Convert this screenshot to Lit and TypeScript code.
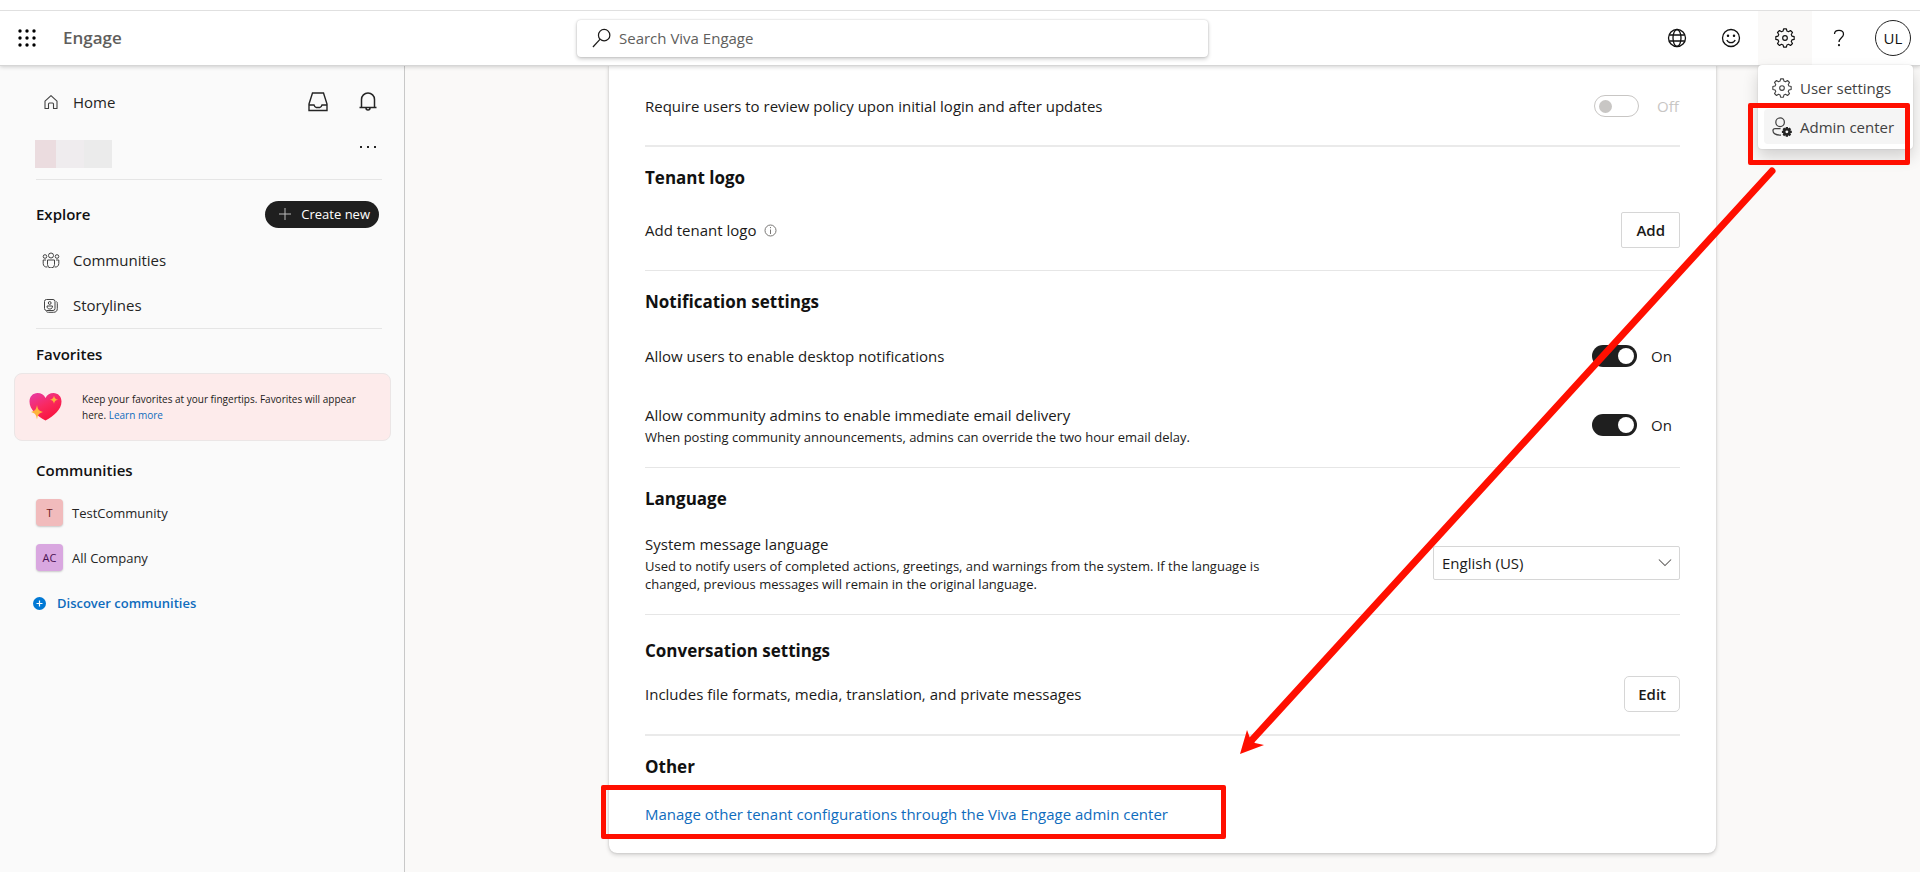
import { LitElement, html, css, svg, nothing } from "lit";
import { customElement } from "lit/decorators.js";

const gear = svg`<path d="M10.3 2h3.4l.6 2.7 1.9.8 2.4-1.5 2.4 2.4-1.5 2.4.8 1.9 2.7.6v3.4l-2.7.6-.8 1.9 1.5 2.4-2.4 2.4-2.4-1.5-1.9.8-.6 2.7h-3.4l-.6-2.7-1.9-.8L5.4 22 3 19.6l1.5-2.4-.8-1.9L1 14.7v-3.4l2.7-.6.8-1.9L3 6.4 5.4 4l2.4 1.5 1.9-.8z" transform="translate(0 -1)" stroke-linejoin="round"/><circle cx="12" cy="12" r="2.8"/>`;

const icons = {
  waffle: svg`<g fill="#000" stroke="none">${[2, 9, 16].map((y) => [2, 9, 16].map((x) => svg`<circle cx=${x} cy=${y} r="1.7"/>`))}</g>`,
  search: svg`<circle cx="12.8" cy="7" r="6"/><path d="M8.6 11.2L1 19.5"/>`,
  globe: svg`<circle cx="10" cy="10" r="8.5"/><ellipse cx="10" cy="10" rx="4" ry="8.5"/><path d="M2.2 7h15.6M2.2 13h15.6"/>`,
  smile: svg`<circle cx="10" cy="10" r="8.5"/><path d="M5.8 12a4.6 4.6 0 0 0 8.4 0"/><circle cx="7" cy="7.8" r=".6" fill="currentColor"/><circle cx="13" cy="7.8" r=".6" fill="currentColor"/>`,
  help: svg`<path d="M5 5.500C5 3 7 1.500 10 1.500s5 1.700 5 4.300c0 3.700-5 4.200-5 8.700"/><circle cx="10" cy="18" r=".5" fill="currentColor"/>`,
  home: svg`<path d="M2 7.200L8 1.700l6 5.500v7.300h-3.500V10a1 1 0 0 0-1-1h-3a1 1 0 0 0-1 1v4.500H2z" stroke-linejoin="round"/>`,
  inbox: svg`<path d="M1 12L4.500 1h11L19 12v6.500H1zM1 13h5c.5 1.500 1 2.500 2.200 2.500h3.600c1.200 0 1.700-1 2.200-2.500h5"/>`,
  bell: svg`<path d="M3.500 15V7.500a6.500 6.500 0 0 1 13 0V15M1.500 15.500h17M8 16a2 2 0 0 0 4 0"/>`,
  people: svg`<circle cx="9" cy="3.500" r="2.500"/><circle cx="3" cy="4.500" r="1.800"/><circle cx="15" cy="4.500" r="1.800"/><path d="M5.500 8h7v4.500a3.500 3.500 0 0 1-7 0zM4 8H1.200v3.500C1.200 14 3 15.300 5.300 15M14 8h2.800v3.500c0 2.500-1.800 3.800-4.100 3.500"/>`,
  story: svg`<rect x="1.500" y="1.500" width="10.500" height="11" rx="2"/><path d="M13.500 3.500c.6.5.8 1 .8 2v5c0 2.500-1.300 3.800-3.800 3.800h-5c-1 0-1.700-.3-2.200-.8"/><circle cx="6.700" cy="5" r="1.400"/><path d="M4 8h5.500c0 2-1 3-2.700 3S4 10 4 8z"/>`,
  chevron: svg`<path d="M1 4l7 7 7-7"/>`,
  info: svg`<circle cx="6.500" cy="6.500" r="5.500"/><path d="M6.500 5.500V10M6.500 3v1.200"/>`,
  plus: svg`<path d="M6 0v12M0 6h12"/>`,
  admin: svg`<circle cx="8.500" cy="5.500" r="4.500"/><path d="M9.500 19C3.500 19 1 17 1 14.500c0-1.300 1-2.200 2.300-2.200H9"/>
    <g stroke="#242424" stroke-width="2.600"><circle cx="15.600" cy="15.600" r="2.800"/><path d="M15.600 10.400v2M15.600 18.800v2M10.400 15.600h2M18.800 15.600h2M11.900 11.900l1.400 1.400M17.900 17.900l1.400 1.400M19.300 11.900l-1.400 1.400M13.300 17.900l-1.400 1.400" stroke-width="2.400"/></g>`,
};

const icon = (shape: unknown, w: number, h: number, box: string, stroke = 1.2) =>
  html`<svg class="icon" aria-hidden="true" width=${w} height=${h} viewBox=${box} fill="none" stroke="currentColor" stroke-width=${stroke}>${shape}</svg>`;

const base = css`
  * { box-sizing: border-box; }
  :host { font-family: "Segoe UI", "Open Sans", "Noto Sans", sans-serif; color: #1b1a19; }
  h2, p { margin: 0; }
  button, input, select { font: inherit; color: inherit; margin: 0; }
  a { color: #0f6cbd; text-decoration: none; }
  .icon { display: block; flex: none; }
`;

@customElement("engage-header")
class EngageHeader extends LitElement {
  static styles = [base, css`
    :host { display: block; position: relative; z-index: 2; padding-top: 10px; background: #fff; box-shadow: 0 1px 0 #d6d6d6, 0 2px 4px rgba(0, 0, 0, .18); }
    .bar { display: grid; grid-template-columns: 577fr 631fr 442fr auto; align-items: center; height: 55px; border-top: 1px solid #e0e0e0; }
    .brand { display: flex; align-items: center; }
    .waffle { border: 0; background: none; padding: 0 18px; }
    .name { font-size: 17px; line-height: 24px; font-weight: 600; color: #605e5c; padding-left: 9px; }
    .search { display: flex; align-items: center; gap: 8px; height: 37px; padding: 0 15px; border-radius: 4px; background: #fff; box-shadow: 0 0 2px rgba(0, 0, 0, .2), 0 2px 4px rgba(0, 0, 0, .2); }
    .search input { flex: 1; min-width: 0; border: 0; outline: 0; padding: 0; background: none; font-size: 15px; line-height: 22px; }
    .search input::placeholder { color: #605e5c; opacity: 1; }
    .tools { grid-column: 4; display: flex; height: 54px; }
    .tool { width: 54px; height: 54px; display: grid; place-items: center; border: 0; background: none; padding: 0; color: #111; }
    .tool.open { background: #faf9f8; }
    .avatar { width: 36px; height: 36px; border: 1px solid #222; border-radius: 50%; display: grid; place-items: center; font-size: 15px; line-height: 20px; }
    .anchor { position: relative; }
    .menu { position: absolute; top: 54px; left: 0; width: 155px; padding: 5px 6px; border-radius: 4px; background: #fff; box-shadow: 0 0 2px rgba(0, 0, 0, .14), 0 8px 16px rgba(0, 0, 0, .16); }
    .item { position: relative; display: flex; align-items: center; gap: 8px; padding: 0 8px; height: 35px; border-radius: 4px; font-size: 15px; line-height: 22px; color: #424242; white-space: nowrap; }
    .item + .item { margin-top: 4px; background: #f5f5f5; }
    .mark { position: absolute; left: -16px; top: -6px; width: 162px; height: 62px; border: 5px solid #ff0f00; border-radius: 2px; pointer-events: none; }
    .arrow { position: absolute; right: 140px; top: 163px; pointer-events: none; }
  `];

  render() {
    return html`
      <header class="bar">
        <div class="brand">
          <button class="waffle" aria-label="App launcher">${icon(icons.waffle, 18, 18, "0 0 18 18")}</button>
          <span class="name">Engage</span>
        </div>
        <label class="search">
          ${icon(icons.search, 19, 20, "0 0 20 20", 1.3)}
          <input type="search" aria-label="Search Viva Engage" placeholder="Search Viva Engage">
        </label>
        <div class="tools">
          <button class="tool" aria-label="Language">${icon(icons.globe, 20, 20, "0 0 20 20", 1.3)}</button>
          <button class="tool" aria-label="Feedback">${icon(icons.smile, 20, 20, "0 0 20 20", 1.3)}</button>
          <div class="anchor">
            <button class="tool open" aria-label="Settings">${icon(gear, 20, 20, "0 0 24 24", 1.4)}</button>
            <nav class="menu">
              <a class="item" href="#user">${icon(gear, 20, 20, "0 0 24 24", 1.3)}User settings</a>
              <a class="item" href="#admin">${icon(icons.admin, 20, 20, "0 0 21 21", 1.3)}Admin center<span class="mark"></span></a>
            </nav>
          </div>
          <button class="tool" aria-label="Help">${icon(icons.help, 18, 18, "0 0 20 20", 1.4)}</button>
          <button class="tool" aria-label="Account"><span class="avatar">UL</span></button>
        </div>
      </header>
      <svg class="arrow" aria-hidden="true" width="544" height="594" viewBox="1236 163 544 594">
        <path d="M1772 171L1251 741" stroke="#ff0f00" stroke-width="7" stroke-linecap="round"/>
        <path d="M1240 754l7-24 3 8 5 5 9 2z" fill="#ff0f00"/>
      </svg>`;
  }
}

@customElement("engage-sidebar")
class EngageSidebar extends LitElement {
  static styles = [base, css`
    :host { display: block; background: #fafafa; border-right: 1px solid #c8c8c8; padding: 19px 13px 0 14px; }
    .row { display: flex; align-items: center; height: 36px; }
    .nav { gap: 13px; padding-left: 27px; font-size: 15px; line-height: 22px; color: #242424; }
    .nav .glyph { width: 19px; display: grid; place-items: center; color: #424242; }
    .nav a { color: inherit; flex: 1; }
    .top { padding-right: 13px; }
    .tool { border: 0; background: none; padding: 0; color: #242424; }
    .tool + .tool { margin-left: 17px; }
    .profile { display: flex; align-items: flex-start; justify-content: space-between; margin: 20px 15px 11px 21px; }
    .blocks { display: flex; height: 28px; }
    .blocks span { width: 28px; background: #ebebeb; }
    .blocks .b1 { width: 21px; background: #ebdcdf; }
    .blocks .b2 { background: #efecee; }
    .dots { display: flex; gap: 5px; padding: 6px 0; }
    .dots i { width: 2px; height: 2px; background: #242424; }
    .rule { height: 1px; margin: 0 9px 0 22px; background: #e5e5e5; }
    h2 { font-size: 15px; line-height: 20px; font-weight: 600; color: #111; padding-left: 22px; }
    .explore { justify-content: space-between; padding-right: 12px; margin: 16px 0 10px; }
    .create { display: flex; align-items: center; gap: 10px; height: 27px; padding: 0 9px 0 14px; border: 0; border-radius: 14px; background: #1f1f1f; color: #fff; font-size: 13px; line-height: 20px; }
    .create .icon { color: #bbb; }
    .stories { margin: 9px 0 5px; }
    .fav { margin-top: 15px; }
    .tip { display: flex; align-items: center; gap: 20px; margin-top: 9px; padding: 0 14px; height: 68px; border: 1px solid #ebe6e6; border-radius: 8px; background: #fdebeb; font-size: 10px; line-height: 16px; }
    .comm { margin: 19px 0 19px; }
    .community { display: flex; align-items: center; gap: 9px; margin-top: 18px; padding-left: 22px; height: 27px; font-size: 13px; line-height: 20px; color: #242424; }
    .tile { width: 27px; height: 27px; display: grid; place-items: center; border-radius: 4px; font-size: 11px; line-height: 16px; background: #f1bbbc; color: #6e1a20; box-shadow: 0 1px 2px rgba(0, 0, 0, .2); }
    .tile.ac { background: #d9a7e0; color: #4a1152; }
    .discover { display: flex; align-items: center; gap: 11px; margin-top: 22px; padding-left: 19px; font-size: 13px; line-height: 20px; font-weight: 600; }
  `];

  render() {
    return html`
      <nav>
        <div class="row nav top">
          <span class="glyph">${icon(icons.home, 16, 16, "0 0 16 16", 1.1)}</span><a href="#home">Home</a>
          <button class="tool" aria-label="Inbox">${icon(icons.inbox, 20, 20, "0 0 20 20", 1.4)}</button>
          <button class="tool" aria-label="Notifications">${icon(icons.bell, 20, 20, "0 0 20 20", 1.5)}</button>
        </div>
        <div class="profile">
          <div class="blocks"><span class="b1"></span><span class="b2"></span><span></span></div>
          <button class="tool dots" aria-label="More"><i></i><i></i><i></i></button>
        </div>
        <div class="rule"></div>
        <div class="row explore">
          <h2>Explore</h2>
          <button class="create">${icon(icons.plus, 12, 12, "0 0 12 12", 1)}Create new</button>
        </div>
        <div class="row nav"><span class="glyph">${icon(icons.people, 18, 16, "0 0 18 16", 1)}</span><a href="#communities">Communities</a></div>
        <div class="row nav stories"><span class="glyph">${icon(icons.story, 15, 15, "0 0 15 15", 1)}</span><a href="#storylines">Storylines</a></div>
        <div class="rule"></div>
        <h2 class="fav">Favorites</h2>
        <div class="tip">
          <svg class="icon" aria-hidden="true" width="33" height="30" viewBox="0 0 33 30">
            <defs><linearGradient id="heart" x1="0" y1="0" x2=".6" y2="1"><stop offset="0" stop-color="#e63ca8"/><stop offset=".55" stop-color="#f9285f"/><stop offset="1" stop-color="#f8133c"/></linearGradient></defs>
            <path d="M16.500 28.500C8 24 .5 17.500.5 9.500.5 4.500 4 1 8.500 1c3.500 0 6.500 1.800 8 5 1.500-3.200 4.500-5 8-5 4.500 0 8 3.500 8 8.500 0 8-7.500 14.500-16 19z" fill="url(#heart)"/>
            <path d="M8 13c.8 4.500 2 6 6 7-4 1-5.200 2.500-6 7.500-.8-5-2-6.500-6-7.500 4-1 5.200-2.500 6-7zM25 3.500c.5 2.600 1.200 3.600 4 4.200-2.800.6-3.500 1.500-4 4.100-.5-2.600-1.200-3.500-4-4.100 2.800-.6 3.500-1.600 4-4.200z" fill="#fdb43c"/>
          </svg>
          <p>Keep your favorites at your fingertips. Favorites will appear here. <a href="#learn">Learn more</a></p>
        </div>
        <h2 class="comm">Communities</h2>
        <div class="community"><span class="tile">T</span>TestCommunity</div>
        <div class="community"><span class="tile ac">AC</span>All Company</div>
        <a class="discover" href="#discover">
          <svg class="icon" aria-hidden="true" width="13" height="13" viewBox="0 0 13 13"><circle cx="6.500" cy="6.500" r="6.500" fill="#0078d4"/><path d="M6.500 3.500v6M3.500 6.500h6" stroke="#fff" stroke-width="1.200"/></svg>
          Discover communities
        </a>
      </nav>`;
  }
}

@customElement("engage-settings")
class EngageSettings extends LitElement {
  static styles = [base, css`
    :host { display: block; background: #faf9f8; padding: 0 204px 19px; }
    .card { padding: 0 36px; background: #fff; border-radius: 0 0 8px 8px; box-shadow: 0 0 2px rgba(0, 0, 0, .16), 0 2px 4px rgba(0, 0, 0, .16); }
    section { padding: 19px 0 21px; border-bottom: 1px solid #e6e6e6; }
    .thick { border-bottom: 2px solid #eaeaea; }
    .policy { padding: 23px 0 21px; }
    .logo { padding-bottom: 22px; }
    .conversation { padding: 24px 0 22px; }
    .other { border: 0; padding-bottom: 28px; }
    h2 { font-size: 17px; line-height: 24px; font-weight: 700; color: #111; margin-bottom: 24px; }
    .logo h2, .language h2 { margin-bottom: 22px; }
    .conversation h2 { margin-bottom: 13px; }
    .row { display: flex; align-items: center; justify-content: space-between; min-height: 36px; font-size: 15px; line-height: 22px; }
    .row + .row { margin-top: 30px; }
    .text { display: flex; align-items: center; gap: 8px; }
    .text .icon { color: #797775; }
    .sub { display: block; max-width: 620px; margin-top: 2px; font-size: 13px; line-height: 18px; }
    .copy { display: block; }
    .switch { display: flex; align-items: center; gap: 14px; width: 88px; }
    .off { width: 86px; gap: 18px; color: #c8c6c4; }
    .switch input { appearance: none; display: flex; align-items: center; justify-content: flex-end; width: 45px; height: 22px; padding: 0 3px; border-radius: 11px; background: #1f1f1f; }
    .switch input::before { content: ""; width: 16px; height: 16px; border-radius: 50%; background: #fff; }
    .off input { justify-content: flex-start; padding: 0 4px; border: 1px solid #c8c6c4; background: #fff; }
    .off input::before { width: 13px; height: 13px; background: #c8c6c4; }
    .btn { height: 36px; padding: 0 14px; border: 1px solid #d6d6d6; border-radius: 2px; background: #fff; font-size: 15px; line-height: 22px; font-weight: 600; }
    .conversation .btn { padding: 0 13px; border-radius: 5px; }
    .pick { display: grid; width: 247px; align-items: center; }
    .pick select, .pick .icon { grid-area: 1 / 1; }
    .pick select { appearance: none; height: 34px; border: 1px solid #d6d6d6; border-radius: 2px; background: #fff; padding: 0 8px; font-size: 15px; line-height: 22px; }
    .pick .icon { justify-self: end; margin-right: 8px; color: #605e5c; pointer-events: none; }
    .link { position: relative; display: inline-block; }
    .mark { position: absolute; left: -44px; top: -18px; right: -58px; height: 54px; border: 5px solid #ff0f00; border-radius: 2px; pointer-events: none; }
    .other .row { min-height: 22px; }
  `];

  private toggle(id: string, on: boolean) {
    return html`<span class="switch ${on ? "" : "off"}">
      <input type="checkbox" role="switch" id=${id} ?checked=${on} ?disabled=${!on}><span>${on ? "On" : "Off"}</span>
    </span>`;
  }

  private row(label: string, id: string, control: unknown, sub?: string) {
    return html`<div class="row">
      <div class="copy"><label for=${id}>${label}</label>${sub ? html`<span class="sub">${sub}</span>` : nothing}</div>${control}
    </div>`;
  }

  render() {
    return html`<main class="card">
      <section class="policy thick">
        ${this.row("Require users to review policy upon initial login and after updates", "policy", this.toggle("policy", false))}
      </section>
      <section class="logo">
        <h2>Tenant logo</h2>
        <div class="row"><span class="text">Add tenant logo ${icon(icons.info, 13, 13, "0 0 13 13", 1)}</span><button class="btn">Add</button></div>
      </section>
      <section>
        <h2>Notification settings</h2>
        ${this.row("Allow users to enable desktop notifications", "desktop", this.toggle("desktop", true))}
        ${this.row("Allow community admins to enable immediate email delivery", "email", this.toggle("email", true), "When posting community announcements, admins can override the two hour email delay.")}
      </section>
      <section class="language">
        <h2>Language</h2>
        ${this.row("System message language", "lang",
          html`<span class="pick"><select id="lang"><option>English (US)</option></select>${icon(icons.chevron, 14, 14, "0 0 16 16", 1.2)}</span>`,
          "Used to notify users of completed actions, greetings, and warnings from the system. If the language is changed, previous messages will remain in the original language.")}
      </section>
      <section class="conversation thick">
        <h2>Conversation settings</h2>
        <div class="row"><span>Includes file formats, media, translation, and private messages</span><button class="btn">Edit</button></div>
      </section>
      <section class="other">
        <h2>Other</h2>
        <div class="row"><a class="link" href="#admin-center">Manage other tenant configurations through the Viva Engage admin center<span class="mark"></span></a></div>
      </section>
    </main>`;
  }
}

@customElement("app-root")
class AppRoot extends LitElement {
  static styles = css`
    :host { display: flex; flex-direction: column; min-height: 100vh; overflow: hidden; background: #faf9f8; }
    .body { flex: 1; display: grid; grid-template-columns: 405px minmax(0, 1fr); }
  `;

  render() {
    return html`<engage-header></engage-header>
      <div class="body"><engage-sidebar></engage-sidebar><engage-settings></engage-settings></div>`;
  }
}
